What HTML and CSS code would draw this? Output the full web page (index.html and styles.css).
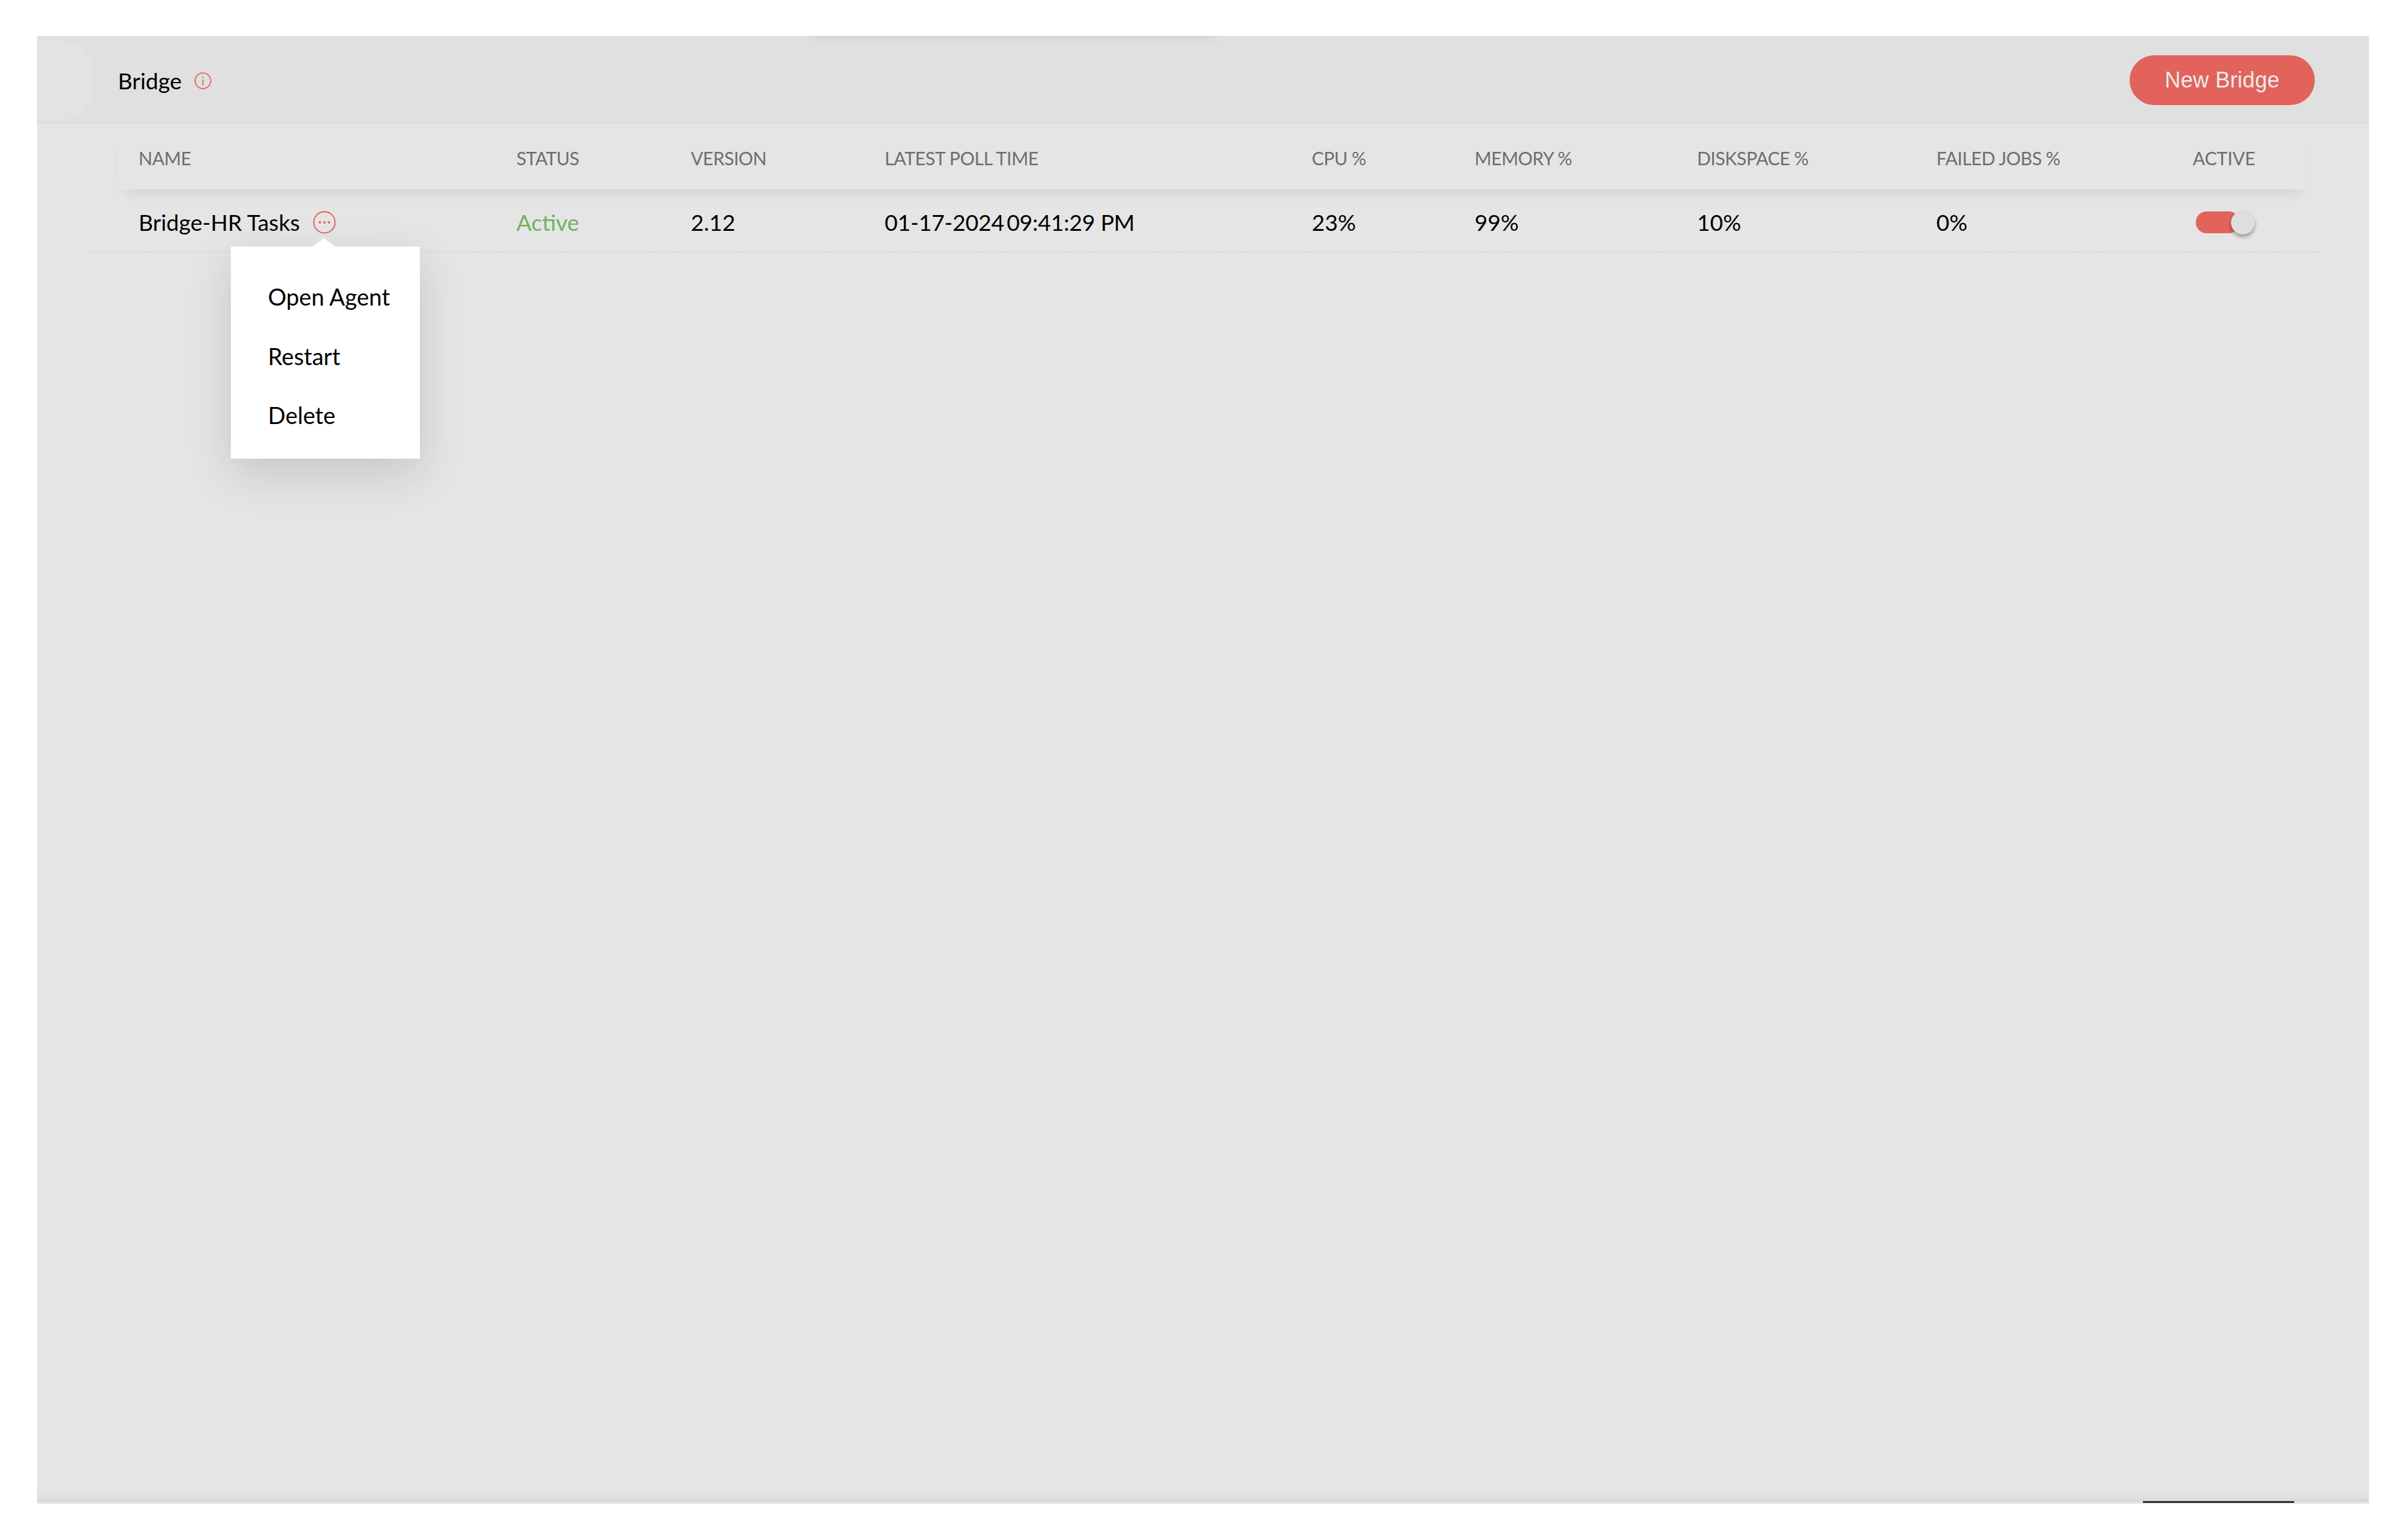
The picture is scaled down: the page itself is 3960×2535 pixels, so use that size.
FILE: index.html
```html
<!DOCTYPE html>
<html lang="en">
<head>
  <meta charset="UTF-8" />
  <title>Bridge</title>
  <link rel="stylesheet" href="styles.css">
</head>
<body>
  <div class="panel">
    <!-- top bar -->
    <header class="top-bar">
      <div class="top-glow"></div>
      <div class="top-bubble"></div>
      <h1 class="page-title">Bridge</h1>
      <svg class="info-icon" viewBox="0 0 28 28" fill="none" stroke="#e2635c">
        <circle cx="14" cy="14" r="12.8" stroke-width="1.8"/>
        <path d="M14 12v9" stroke-width="1.8"/>
        <path d="M14 7v2.4" stroke-width="1.8"/>
      </svg>
      <button class="new-btn">New Bridge</button>
    </header>

    <!-- table -->
    <div class="table-head cols">
      <div>NAME</div>
      <div>STATUS</div>
      <div>VERSION</div>
      <div class="poll-head">LATEST POLL TIME</div>
      <div>CPU %</div>
      <div>MEMORY %</div>
      <div>DISKSPACE %</div>
      <div>FAILED JOBS %</div>
      <div class="active-head">ACTIVE</div>
    </div>

    <div class="table-row cols">
      <div class="name-cell">
        Bridge-HR Tasks
        <svg class="more-icon" viewBox="0 0 38 38" fill="none">
          <circle cx="19" cy="19" r="17.5" stroke="#e2635c" stroke-width="2"/>
          <circle cx="11.5" cy="19" r="2" fill="#e2635c"/>
          <circle cx="19" cy="19" r="2" fill="#e2635c"/>
          <circle cx="26.5" cy="19" r="2" fill="#e2635c"/>
        </svg>
        <div class="row-menu">
          <div class="menu-item">Open Agent</div>
          <div class="menu-item">Restart</div>
          <div class="menu-item">Delete</div>
        </div>
      </div>
      <div class="status-active">Active</div>
      <div>2.12</div>
      <div class="poll-time"><span class="poll-date">01-17-2024</span> 09:41:29 PM</div>
      <div>23%</div>
      <div>99%</div>
      <div>10%</div>
      <div>0%</div>
      <div class="toggle-cell">
        <div class="toggle"><span class="knob"></span></div>
      </div>
    </div>

    <div class="panel-foot"><span class="foot-bar"></span></div>
  </div>
</body>
</html>
```

FILE: styles.css
```css
* {
  box-sizing: border-box;
  margin: 0;
  padding: 0;
}

body {
  background-color: #fff;
  color: #000;
  font-family: 'Lato', sans-serif;
  padding: 59px 61px 60px;
}

.panel {
  display: flex;
  flex-direction: column;
  height: 2416px;
  background-color: #e5e5e5;
  overflow: hidden;
}

/* --- top bar --- */
.top-bar {
  position: relative;
  display: flex;
  align-items: center;
  height: 145px;
  padding: 0 89px 0 133px;
  background-color: #e0e0e0;
  border-bottom: 1px solid #dadada;
}

.top-glow {
  position: absolute;
  top: -10px;
  left: 1277px;
  width: 660px;
  height: 10px;
  box-shadow: 0 2px 16px rgba(0,0,0,0.09);
}

.top-bubble {
  position: absolute;
  top: 8px;
  left: -40px;
  width: 132px;
  height: 130px;
  border-radius: 42%;
  background-color: #e3e3e3;
}

.page-title {
  position: relative;
  font-size: 37px;
  font-weight: 400;
  margin-top: 3px;
}

.info-icon {
  width: 28px;
  height: 28px;
  margin-left: 21px;
  margin-top: 3px;
}

.new-btn {
  margin-left: auto;
  margin-top: 2px;
  width: 305px;
  height: 82px;
  border: none;
  border-radius: 41px;
  background-color: #e2635c;
  color: #ececec;
  font-family: 'Liberation Sans', sans-serif;
  font-size: 36px;
  letter-spacing: 0.3px;
}

/* --- table --- */
.cols {
  display: grid;
  grid-template-columns: 622px 287px 319px 703px 268px 366px 394px 422px 1fr;
  align-items: center;
}

.table-head {
  position: relative;
  z-index: 1;
  height: 108px;
  margin: 0 100px 0 133px;
  padding: 3px 0 0 34px;
  background-color: #e5e5e5;
  color: #6e6e6e;
  font-size: 30px;
  letter-spacing: -0.5px;
  box-shadow: 0 16px 22px -14px rgba(0,0,0,0.13);
}

.poll-head {
  letter-spacing: -0.4px;
}

.active-head {
  letter-spacing: -0.1px;
}

.table-row {
  height: 103px;
  margin: 0 81px 0 86px;
  padding: 5px 0 0 81px;
  border-bottom: 1px dashed #cfcfcf;
  font-size: 37px;
}

.name-cell {
  position: relative;
  display: flex;
  align-items: center;
  height: 100%;
}

.more-icon {
  width: 38px;
  height: 38px;
  margin-left: 22px;
}

.status-active {
  color: #6db35f;
}

.poll-time {
  letter-spacing: -0.25px;
}

.poll-date {
  margin-right: -5px;
}

/* --- row menu --- */
.row-menu {
  position: absolute;
  z-index: 2;
  top: 89px;
  left: 152px;
  width: 311px;
  height: 349px;
  padding: 34px 0 0 61px;
  background-color: #fff;
  box-shadow: 0 24px 70px rgba(0,0,0,0.14);
}

.row-menu::before {
  content: "";
  position: absolute;
  top: -14px;
  left: 133px;
  width: 40px;
  height: 15px;
  background-color: #fff;
  clip-path: polygon(50% 0, 100% 100%, 0 100%);
}

.menu-item {
  height: 97.5px;
  line-height: 97.5px;
  font-size: 38px;
}

/* --- toggle --- */
.toggle-cell {
  padding-left: 5px;
}

.toggle {
  position: relative;
  width: 72px;
  height: 36px;
  border-radius: 18px;
  background-color: #e2635c;
}

.knob {
  position: absolute;
  top: -1px;
  right: -25px;
  width: 39px;
  height: 39px;
  border-radius: 50%;
  background-color: #dedede;
  box-shadow: 0 4px 6px rgba(0,0,0,0.35);
}

/* --- bottom edge --- */
.panel-foot {
  position: relative;
  height: 18px;
  margin-top: auto;
  background: linear-gradient(to bottom, #e5e5e5 0, #dcdcdc 12px, #d0d0d0 13px, #d0d0d0 13.5px, #e1e1e1 14px);
}

.foot-bar {
  position: absolute;
  bottom: 1px;
  left: 3466px;
  width: 249px;
  height: 3px;
  background-color: #2b2b2b;
}
```
